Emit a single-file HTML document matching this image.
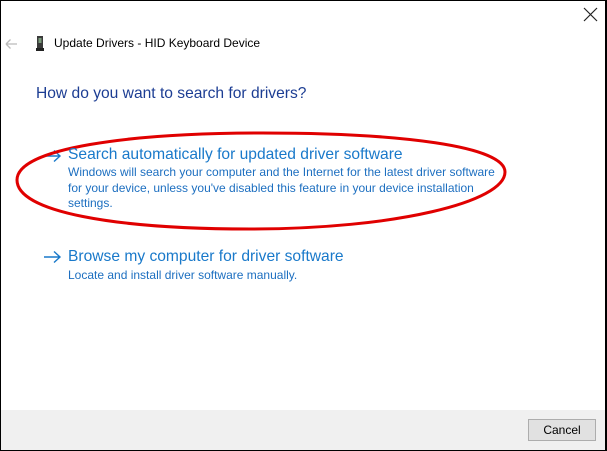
<!DOCTYPE html>
<html><head><style>
html,body{margin:0;padding:0;}
body{width:607px;height:451px;position:relative;overflow:hidden;background:#fff;font-family:"Liberation Sans",sans-serif;}
.frame{position:absolute;left:0;top:0;width:604px;height:449px;border:1px solid #000;border-right-width:2px;box-sizing:content-box;}
.t{position:absolute;white-space:nowrap;}
.footer{position:absolute;left:1px;top:410px;width:604px;height:40px;background:#f0f0f0;}
.btn{position:absolute;left:528px;top:419px;width:68px;height:22px;background:#e1e1e1;border:1px solid #adadad;box-sizing:border-box;font-size:12px;text-align:center;line-height:20px;color:#000;}
</style></head><body>
<div class="frame"></div>
<div class="footer"></div>
<div class="btn">Cancel</div>
<svg style="position:absolute;left:0;top:0" width="607" height="451">
  <path d="M584 8 L597 21 M597 8 L584 21" stroke="#222" stroke-width="1.2"/>
  <path d="M6 44 H17 M6 44 L10.5 39.5 M6 44 L10.5 48.5" stroke="#bbb" stroke-width="1.3" fill="none"/>
  <rect x="37" y="36" width="6" height="14" fill="#3a3a3a"/>
  <rect x="38.5" y="38" width="3" height="5" fill="#7a9a7a"/>
  <rect x="36" y="48" width="8" height="3" fill="#222"/>
  <path d="M44 156 H60 M54 150.5 L60 156 L54 161.5" stroke="#1979ca" stroke-width="1.4" fill="none"/>
  <path d="M44 257 H60 M54 251.5 L60 257 L54 262.5" stroke="#1979ca" stroke-width="1.4" fill="none"/>
  <path d="M17 180 C17 148 130 133 262 133 C400 133 505 146 505 172 C505 202 395 229 250 229 C115 229 17 212 17 180 Z" fill="none" stroke="#e00000" stroke-width="3"/>
</svg>
<div class="t" style="left:54px;top:36px;font-size:12px;color:#000;">Update Drivers - HID Keyboard Device</div>
<div class="t" style="left:36px;top:85px;font-size:15.6px;color:#1c3d93;">How do you want to search for drivers?</div>
<div class="t" style="left:68px;top:146px;font-size:15.6px;color:#1979ca;">Search automatically for updated driver software</div>
<div class="t" style="left:68px;top:165px;font-size:12px;line-height:15.5px;color:#1d6fc0;">Windows will search your computer and the Internet for the latest driver software<br>for your device, unless you've disabled this feature in your device installation<br>settings.</div>
<div class="t" style="left:68px;top:248px;font-size:15.6px;color:#1979ca;">Browse my computer for driver software</div>
<div class="t" style="left:68px;top:268px;font-size:12px;color:#1d6fc0;">Locate and install driver software manually.</div>
</body></html>
